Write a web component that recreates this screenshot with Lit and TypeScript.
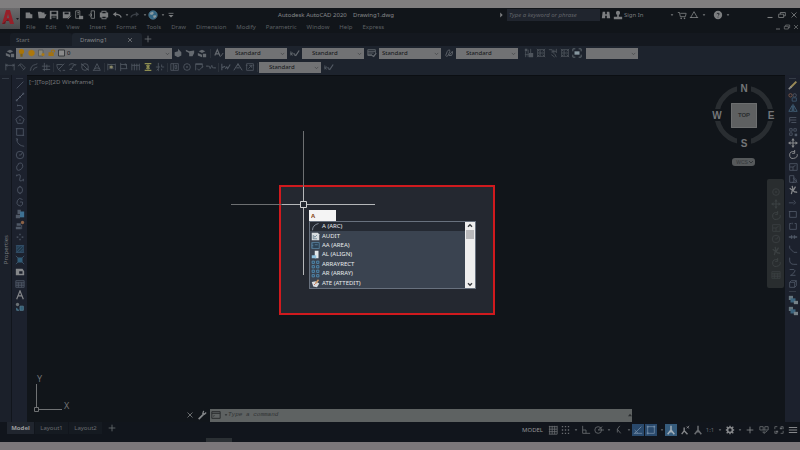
import { LitElement, html, svg, css, nothing } from "lit";
import { customElement, state } from "lit/decorators.js";
import { classMap } from "lit/directives/class-map.js";

// Glyphs share a 12 x 12 grid and are stroked in the current text colour.
const glyphs: Record<string, unknown> = {
  newFile: svg`<path class="f" d="M2 3h5l1 2h2v5H2z"/>`,
  open: svg`<path class="f" d="M1 2h4l1 1h3v2h2.5L9 10H2z"/>`,
  save: svg`<path class="f" fill-rule="evenodd" d="M1 1h10v10H1zM3 2v3h6V2zM3 7v4h6V7z"/><path d="M4 8.5h4"/>`,
  saveAs: svg`<path class="f" fill-rule="evenodd" d="M1 2h9v5L7 10H1zM3 3v2h5V3z"/><path d="M7 11l4-4"/>`,
  web: svg`<path d="M2 1h5v9H2zM4 3h2M4 5h2"/><path class="f" d="M6 7h5v4H6z"/>`,
  mobile: svg`<path d="M5 1h4v9H5zM2 6h4M4 4l2 2-2 2"/>`,
  print: svg`<path class="f" fill-rule="evenodd" d="M3 1h6v2h2v6H9v2H3V9H1V3h2zM4 2v2h4V2zM4 8v2h4V8z"/>`,
  undo: svg`<path stroke-width="1.6" d="M11 9Q10 5 3 5"/><path class="f" d="M1 5l4-3v6z"/>`,
  redo: svg`<path stroke-width="1.4" d="M1 9Q2 5 9 5"/><path class="f" d="M11 5L7 2v6z"/>`,
  globe: svg`<circle cx="6" cy="6" r="5" fill="#316583" stroke="#527b91"/><path fill="#8a999f" stroke="none" d="M3 3l3-1 1 2-2 2-3-1zM6 7l3-1 1 2-3 2z"/>`,
  dot: svg`<path class="f" d="M4 5h4L6 7.500z"/>`,
  more: svg`<path d="M3 4h6"/><path class="f" d="M3 6h6L6 9z"/>`,
  right: svg`<path class="f" d="M5 3l3 3-3 3z"/>`,
  up: svg`<path class="f" d="M3 8h6L6 4z"/>`,
  binoc: svg`<path class="f" d="M2 2h3v3h2V2h3l1 8H7V7H5v3H1z"/>`,
  user: svg`<circle class="f" cx="6" cy="3.500" r="2.500"/><path class="f" d="M5 5h2v3h4v3H1V8h4z"/>`,
  cart: svg`<path d="M1 3h2l1 5h6l1-4H4"/><circle class="f" cx="5" cy="10" r="1"/><circle class="f" cx="9" cy="10" r="1"/>`,
  share: svg`<path d="M2 9l4-7 4 7zM1 9h3M8 9h3"/>`,
  help: svg`<circle class="f" cx="6" cy="6" r="5"/><path stroke="#181c22" d="M4.500 4.500q1.500-1.500 3 0 0 1-1.500 2M6 8v1"/>`,
  min: svg`<path stroke-width="1.300" d="M3 9h6"/>`,
  restore: svg`<path d="M2 5h6v4H2zM4 5V3h6v4H8"/>`,
  close: svg`<path d="M3 3l6 6M9 3L3 9"/>`,
  plus: svg`<path d="M6 2v8M2 6h8"/>`,
  chevron: svg`<path d="M3 5l3 3 3-3"/>`,
  layers: svg`<path class="f" d="M2 4l4-2 4 2-4 2zM1 6l5 2v3L1 9zM7 7h4v4H7z"/>`,
  layerUp: svg`<path class="f" d="M2 5l4-1V1l4 4v4l-4 2-4-2z"/>`,
  layerPrev: svg`<path class="f" d="M1 2l4 2 6-1v3L9 10H5V6L1 4z"/>`,
  bulb: svg`<circle cx="6" cy="4" r="3.500" fill="#a87408" stroke="none"/><path fill="#806014" stroke="none" d="M4.500 7h3v4h-3z"/>`,
  sun: svg`<circle cx="6" cy="6" r="4" fill="#ad780c" stroke="#a37928" stroke-dasharray="1 1"/>`,
  freeze: svg`<path fill="#898777" stroke="#515354" d="M2 2h6v8H2z"/><circle cx="8" cy="8" r="2" fill="#a97814" stroke="none"/>`,
  lock: svg`<path stroke="#a07114" stroke-width="1.500" d="M6 5V3q2-2 4 0v2"/><path fill="#a37210" stroke="none" d="M2 5h7v5H2z"/>`,
  swatch: svg`<path fill="#8b8b8b" stroke="#24272a" d="M2 2h8v8H2z"/>`,
  textStyle: svg`<path stroke-width="1.400" d="M1 9l3-7 3 7M2 7h4"/><path d="M6 9l2 1 3-4"/>`,
  dimStyle: svg`<path d="M1 4v5M1 7h5M3 5L1 7l2 2"/><path stroke-width="1.500" d="M5 8l2 1 4-6"/>`,
  tableStyle: svg`<path d="M1 2h9v4M1 2v7h5M1 4h9M1 6h7M1 8h5"/><path stroke-width="1.500" d="M6 9l2 1 3-4"/>`,
  leader: svg`<path d="M2 9l2-5q3-4 3 0L5 9q-2 2-3 0zM6 9l4-5q1 2-1 5z"/>`,
  linear: svg`<path d="M1 2v8M11 2v8M1 4h10M3 3L1 4l2 1M9 3l2 1-2 1"/>`,
  aligned: svg`<path d="M1 5l4-3 5 5-3 3M3 3l5 6"/>`,
  arcLen: svg`<path d="M2 10q0-6 6-7M5 10q0-3 5-4M8 3l2-1M2 10H1"/>`,
  ordinate: svg`<path d="M4 1v10M1 5h10M7 3v7M2 9h9"/>`,
  radius: svg`<path d="M1 3h7M1 3q0 6 5 8M3 9l7-7M8 10h3"/>`,
  jogged: svg`<path d="M1 4q4-4 8 0M2 9l4-3 0-2 4-1M2 9h3M9 10h2"/>`,
  diameter: svg`<circle cx="6" cy="6" r="4"/><path d="M2 2l8 8M2 2v2M10 10V8"/>`,
  angular: svg`<path d="M2 10l4-8 4 8H1M3 8q3-2 6 0"/>`,
  quick: svg`<path d="M1 2v8M10 2v8M1 3h9M3 6h5M3 8h5"/><path stroke="#9b9871" d="M5 4v4M3 5l4 2M7 5L3 7"/>`,
  base: svg`<path d="M2 1v10M2 3h7v5M2 8h8M7 2l2 1-2 1"/>`,
  cont: svg`<path d="M1 2v8M4 2v8M7 2v8M10 2v8M1 4h9"/>`,
  space: svg`<path stroke="#8d8d50" stroke-width="1.500" d="M2 2h8M2 10h8M6 3v6M4 4l2 2 2-2M4 8l2-2 2 2"/>`,
  brk: svg`<path d="M4 1v10M8 3v3M1 6h5M8 6h3M4 8l-2 2M8 8v2"/>`,
  tol: svg`<path d="M1 2v8h9V2zM4 2v8M6 4h2v4H6z"/>`,
  center: svg`<circle cx="6" cy="6" r="4"/><path d="M5 6h2M6 5v2"/>`,
  inspect: svg`<path d="M2 10V2h8v5M2 3h8M4 8l2 2 5-5"/>`,
  jog: svg`<path d="M1 5h3l1 3 2-4 1 3h3M1 4v2M11 6v2"/>`,
  edit: svg`<path stroke-width="1.300" d="M1 2v8M1 7l4-2M5 8l2-2 1 2 3-5"/>`,
  dimText: svg`<path stroke-width="1.200" d="M1 10l5-8 5 8M4 7h4M6 2v3"/>`,
  update: svg`<path d="M2 2h8v8H2zM1 4h2M9 4h2M4 8l4-4M8 7V4H5"/>`,
  line: svg`<path d="M2 10l8-8"/>`,
  xline: svg`<path stroke="#677080" d="M2 10l8-8"/><path class="f" d="M1 9h2v2H1zM9 1h2v2H9zM5 5h2v2H5z"/>`,
  pline: svg`<path d="M3 3h4q3 1 2 4t-5 2H2M3 2v2"/>`,
  polygon: svg`<path d="M6 1l5 4-2 5H3L1 5z"/><path d="M5 6h2"/>`,
  rect: svg`<path d="M2 2h8v8H2zM1 2h2M9 10h2"/>`,
  arc: svg`<path d="M2 2q1 7 9 8M1 1h2v2"/>`,
  circle: svg`<circle cx="6" cy="6" r="4.500"/><path d="M5 6h2l2-3"/>`,
  cloud: svg`<path d="M4 2q4-2 5 1t-1 5-4 2-2-3 1-3 1-2"/>`,
  spline: svg`<path d="M2 3q6-3 4 3t4 2M2 2v2M10 7v3"/>`,
  ellipse: svg`<ellipse cx="6" cy="6" rx="3" ry="4"/><path d="M6 1v2M6 9v2"/>`,
  ellArc: svg`<path d="M9 3q-4-3-6 1t1 6 5-1V6H6"/>`,
  block: svg`<path class="f" d="M3 1h4v5H3zM1 7h5v4H1z"/><path fill="#3e7193" stroke="none" d="M6 3h5v7H6z"/>`,
  makeBlock: svg`<path class="f" d="M2 4h5v3H2zM1 8h6v3H1z"/><circle cx="9" cy="3" r="2" fill="#8c6246" stroke="none"/><path d="M8 6v5"/>`,
  point: svg`<path stroke-width="1.500" d="M6 2v2M6 8v2M2 6h2M8 6h2"/>`,
  hatch: svg`<path fill="#20384b" stroke="#34506a" d="M2 2h8v8H2zM2 6l4-4M2 10l8-8M6 10l4-4M1 2h10M1 10h10"/>`,
  gradient: svg`<path fill="#315d78" stroke="none" d="M3 3h6v6H3z"/><path stroke="#3c566c" d="M1 1l3 3M11 1L8 4M1 11l3-3M11 11L8 8"/>`,
  region: svg`<path class="f" fill-rule="evenodd" d="M1 2h8l2 3v5H1zM5 5v3h4V5z"/>`,
  table: svg`<path d="M1 2h10v8H1zM1 4h10M1 6h10M1 8h10M4 4v6M8 4v6"/>`,
  mtext: svg`<path stroke-width="1.400" d="M2 11l4-10 4 10M3 7h6"/>`,
  addSel: svg`<circle cx="3" cy="3" r="2" fill="#6b7175" stroke="none"/><path fill="#346079" stroke="#52788b" d="M6 5h4v5H6zM2 7v3h3"/>`,
  erase: svg`<path stroke="#9b8b57" stroke-width="2.300" d="M3 9l7-7"/><path stroke="#8a8b8b" stroke-width="2" d="M1 11l3-3"/>`,
  copy: svg`<circle cx="3" cy="4" r="2" stroke="#855d48"/><circle cx="8" cy="4" r="2"/><path stroke="#3e5a71" d="M5 7h5v4H5z"/>`,
  mirror: svg`<path stroke="#45647c" d="M6 1v10M5 3v7H1zM7 3v7h4z"/>`,
  offset: svg`<path d="M2 3h8M2 6h8M4 9h6M2 3v6"/>`,
  array: svg`<path d="M2 2h3v3H2zM7 2h3v3H7zM2 7h3v3H2z"/><path class="f" d="M8 8h3v3H8z"/>`,
  move: svg`<path stroke-width="1.300" d="M6 2v8M2 6h8"/><path class="f" d="M6 0l2 3H4zM6 12l2-3H4zM0 6l3-2v4zM12 6L9 4v4z"/>`,
  rotate: svg`<path stroke-width="1.200" d="M8 2q-6-1-6 4t5 4 4-5M8 0v4H5"/>`,
  scale: svg`<path d="M2 2h9v8H2zM2 6h4v4M6 6l3-2"/>`,
  stretch: svg`<path d="M2 2h5v8H2zM7 4l3 3v3H5M6 5l5 5"/>`,
  trim: svg`<path stroke-width="1.500" d="M2 4l7 5M5 1l1 5M9 2L6 7M5 7l-1 4M9 8l2 1"/>`,
  extend: svg`<path d="M1 7h6M7 4l2 3-2 2"/>`,
  breakPt: svg`<path d="M2 3h8v7H2zM1 3h2"/>`,
  breakAt: svg`<path d="M4 3H2v7h8V3H8M5 2v2"/>`,
  join: svg`<path stroke-width="1.600" d="M1 6h4M7 6h4M4 4l1 2-1 2M8 4L7 6l1 2"/>`,
  chamfer: svg`<path d="M2 2v3l5 5h4"/>`,
  fillet: svg`<path d="M2 2v3q0 5 5 5h4"/>`,
  blend: svg`<path d="M2 3h5q3 1 0 4t-4 3h6"/>`,
  explode: svg`<path d="M2 4h6v6H2zM2 4l2-2h6v6l-2 2M8 4l2-2"/>`,
  front: svg`<path fill="#64747d" stroke="none" d="M1 1h5v5H1z"/><path fill="#3c647d" stroke="none" d="M3 4h6v5H3z"/><path fill="#758188" stroke="none" d="M7 7h5v4H7z"/>`,
  grid: svg`<path d="M2 1v10M5 1v10M8 1v10M1 2h10M1 5h10M1 8h10M11 1v10M1 11h10"/>`,
  snap: svg`<path stroke-width="1.600" stroke-dasharray="1.600 2" d="M1 2h10M1 6h10M1 10h10"/>`,
  ortho: svg`<path d="M2 1v9h9M2 6h4v4"/>`,
  polar: svg`<circle cx="5" cy="6" r="4"/><path d="M5 6l5-4M5 6h7"/>`,
  iso: svg`<path d="M7 1L4 5l4 5M4 5v4"/>`,
  track: svg`<path d="M1 10h10M2 10L10 2M2 6l4 4"/>`,
  osnap: svg`<path d="M2 2h8v8H2z"/><path class="f" d="M1 1h2v2H1zM9 1h2v2H9zM1 9h2v2H1z"/>`,
  scaleA: svg`<path stroke-width="1.800" d="M6 1v5l-4 5M6 6l4 5M4 8h4"/>`,
  scaleB: svg`<path stroke-width="1.700" d="M5 3v4l-3 4M5 7l4 4"/><path d="M8 2l3 2M11 1L8 4"/>`,
  gear: svg`<circle cx="6" cy="6" r="3" stroke-width="2"/><path stroke-width="1.700" d="M6 1v2M6 9v2M1 6h2M9 6h2M2 2l2 2M8 8l2 2M10 2L8 4M4 8l-2 2"/>`,
  monitor: svg`<path d="M1 2h4v4H1zM7 2h4v4H7zM4 8l2 2 4-3M6 5v5"/>`,
  full: svg`<path d="M1 5V2h3M8 2h3v3M11 7v3H8M4 10H1V7"/><path class="f" d="M7 3h3v2H7zM2 7h3v2H2z"/>`,
  menu: svg`<path stroke-width="1.300" d="M1 3h10M1 6h10M1 9h10"/>`,
  wrench: svg`<path stroke-width="2" d="M2 11l6-6"/><path stroke-width="1.500" d="M8 1L7 4l2 1 2-2"/>`,
  prompt: svg`<path d="M1 2h10v8H1zM1 4h10" stroke-width="1.200"/><path d="M3 6l1 1-1 1"/>`,
  ref: svg`<path class="f" d="M1 1h3v3H1zM6 6h5v5H6z"/><path d="M2 4v7M5 2v9M8 1v5M1 8h5"/>`,
  refA: svg`<path d="M2 2h8v8H2zM1 1l3 3M11 1L8 4M1 11l3-3M11 11L8 8M5 2v8M2 6h8"/>`,
  refB: svg`<path d="M1 2h4v4M5 4h5M7 2v5M10 1v5M4 8l4 3M8 7l2 4"/>`,
  viewport: svg`<path stroke="#6b7379" d="M1 4V1h3M8 1h3v3M11 8v3H8M4 11H1V8"/><path fill="#87979f" stroke="none" d="M3 4h6v4H3z"/>`,
  cmdArc: svg`<path stroke="#9ca8b5" d="M2 11q0-7 8-9"/>`,
  audit: svg`<path fill="#d6dce0" stroke="none" d="M1 1h8l2 2v8H1z"/><path stroke="#637b8d" d="M3 4v5h5M8 4L5 7 4 5"/>`,
  area: svg`<path stroke="#5b87a6" fill="#2e4355" d="M1 2h10v8H1zM1 4h2M1 6h2M1 8h2M5 5h4"/>`,
  align: svg`<path fill="#e2e7e9" stroke="none" d="M5 1h5v10H5z"/><path fill="#8ec1df" stroke="none" d="M1 7h6v4H1z"/>`,
  cmdArray: svg`<path stroke="#5c9ac1" fill="#29445a" d="M1.500 1.500h3v3h-3zM7.500 1.500h3v3h-3zM1.500 7.500h3v3h-3zM7.500 7.500h3v3h-3z"/>`,
  attedit: svg`<path fill="#d9dde0" stroke="none" d="M1 4l5-1 5 3-3 5-5-1z"/><path stroke="#cf9a68" stroke-width="2" d="M6 6l4-5"/><path stroke="#b94d38" d="M4 8l2-2"/>`,
};

const icon = (name: string, extra = "") =>
  html`<svg class="icon ${extra}" viewBox="0 0 12 12" aria-hidden="true">${glyphs[name]}</svg>`;

const tool = (name: string, extra = "") =>
  html`<button class="tool ${extra}" type="button" aria-label=${name}>${icon(name)}</button>`;

const combo = (label: string, value: string, extra = "") =>
  html`<span class="combo ${extra}">
    <select aria-label=${label}><option>${value}</option></select>${icon("chevron", "chev")}
  </span>`;

const menus = ["File", "Edit", "View", "Insert", "Format", "Tools", "Draw", "Dimension", "Modify", "Parametric", "Window", "Help", "Express"];

const dimensionGroups = [
  ["linear", "aligned", "arcLen", "ordinate"],
  ["radius", "jogged", "diameter", "angular"],
  ["quick", "base", "cont", "space", "brk"],
  ["tol", "center", "inspect", "jog"],
  ["edit", "dimText", "update"],
];

const drawTools = ["line", "xline", "pline", "polygon", "rect", "arc", "circle", "cloud", "spline", "ellipse", "ellArc", "block", "makeBlock", "point", "hatch", "gradient", "region", "table", "mtext", "addSel"];
const modifyTools = ["erase", "copy", "mirror", "offset", "array", "move", "rotate", "scale", "stretch", "trim", "extend", "breakPt", "breakAt", "join", "chamfer", "fillet", "blend", "explode"];

const commands = [
  ["cmdArc", "A (ARC)"],
  ["audit", "AUDIT"],
  ["area", "AA (AREA)"],
  ["align", "AL (ALIGN)"],
  ["cmdArray", "ARRAYRECT"],
  ["cmdArray", "AR (ARRAY)"],
  ["attedit", "ATE (ATTEDIT)"],
];

@customElement("app-root")
export class AppRoot extends LitElement {
  @state() private selected = 0;

  static styles = css`
    :host {
      display: flex;
      flex-direction: column;
      min-height: 100vh;
      background: #11151a;
      color: #7c7e80;
      font: 6px/10px "Noto Sans", "Open Sans", sans-serif;
    }
    * { box-sizing: border-box; }
    button, input, select {
      margin: 0;
      padding: 0;
      border: 0;
      border-radius: 0;
      background: none;
      color: inherit;
      font: inherit;
    }
    .icon {
      display: block;
      width: 10px;
      height: 10px;
      fill: none;
      stroke: currentColor;
      stroke-width: 1;
    }
    .icon .f { fill: currentColor; stroke: none; }
    .tool {
      display: grid;
      place-items: center;
      flex: none;
      width: 12px;
      height: 12px;
    }
    .slim { width: 6px; }
    .slim .icon { width: 8px; height: 8px; }
    .wide { width: 15px; }
    .dim { color: #3b4047; }
    .band { flex: none; height: 8px; background: #807e7f; }
    .band.low { background: #7b777a; }

    .header { display: grid; grid-template-columns: 20px 1fr; grid-template-rows: 13px 12px; }
    .logo {
      grid-row: 1 / 3;
      align-self: start;
      width: 20px;
      height: 21px;
      background: linear-gradient(#6b6a6c, #4b4b4d);
    }
    .logo svg { display: block; width: 20px; height: 21px; }
    .titlebar { display: flex; align-items: center; min-width: 0; }
    .quick { display: grid; grid-template-columns: repeat(8, 1fr); justify-items: center; width: 100px; margin-left: 3px; }
    .title { flex: 1; text-align: center; white-space: pre; color: #87898b; }
    .search { width: 93px; height: 12px; padding: 0 2px; background: #20252e; font-style: italic; }
    .search::placeholder { color: #606469; opacity: 1; }
    .sign { flex: none; width: 44px; text-align: left; }
    .store { display: flex; margin: 0 6px 0 2px; }
    .winbtns { display: flex; margin-left: auto; }
    .titlebar .winbtns { margin-left: 34px; }
    .menubar { display: flex; align-items: center; gap: 10px; padding-left: 6px; color: #5d6064; }
    .menubar .tool { width: 9px; color: #7c7e80; }
    .menubar .icon { width: 8px; height: 8px; }

    .tabs { display: flex; height: 13px; padding-left: 10px; color: #6c6f73; background: #14181f; }
    .tab { display: flex; align-items: center; justify-content: space-between; width: 62px; padding: 0 6px; background: #181d25; border-radius: 3px 3px 0 0; }
    .tab.on { width: 70px; padding: 0 8px; background: #1e242d; color: #85878a; }
    .tab .icon { width: 8px; height: 8px; }

    .bars { background: #1d232d; height: 29px; }
    .bar { display: flex; align-items: center; height: 14px; padding-left: 4px; color: #656a70; }
    .bar.second { color: #515862; }
    .sep { flex: none; width: 1px; height: 9px; margin: 0 1px; background: #2b313a; }
    .sep.big { margin: 0 2px; }
    .combo { display: grid; flex: none; width: 62px; height: 11px; background: #717274; color: #111214; }
    .combo > * { grid-area: 1 / 1; }
    .combo select { appearance: none; width: 100%; padding-left: 10px; line-height: 11px; }
    .combo.near select { padding-left: 3px; }
    .combo.short { width: 52px; margin-left: 3px; }
    .chev { width: 7px; height: 7px; justify-self: end; align-self: center; margin-right: 1px; color: #393b3e; pointer-events: none; }
    .layer { display: flex; align-items: center; width: 156px; height: 11px; background: #717274; }
    .layer > .icon { flex: none; width: 9px; margin-left: 1px; }
    .layer .combo { flex: 1; }
    .layer .combo select { padding-left: 1px; }
    .refs { display: flex; margin-left: 5px; color: #4e545c; }

    .work { flex: 1; display: flex; }
    .side { display: flex; flex-direction: column; flex: none; width: 15px; padding-top: 3px; background: #1c212d; color: #4f5866; }
    .props { width: 12px; align-items: center; border-right: 1px solid #11151c; background: #1b202a; color: #75787c; }
    .props .name { margin-top: 156px; writing-mode: vertical-rl; transform: rotate(180deg); line-height: 10px; }
    .grip { align-self: center; width: 7px; height: 1px; background: #343b46; }
    .stack { display: grid; justify-items: center; align-items: center; grid-auto-rows: 1fr; }
    .stack .tool { height: 10px; }
    .stack.draw { height: 234px; }
    .stack.modify { height: 211px; margin-bottom: 1px; }
    .stack.order { height: 23px; margin-top: 2px; }
    .bright { color: #85878a; }

    .canvas { position: relative; flex: 1; overflow: hidden; background: #11151a; border-top: 1px solid #0b0e12; }
    .viewlabel { position: absolute; left: 2px; top: 1px; color: #76787a; }
    .spot { position: absolute; left: 252px; top: 109px; width: 216px; height: 130px; border: 2px solid #d01a1e; background: #242830; }
    .cross { position: absolute; left: 203px; top: 55px; width: 146px; height: 146px; fill: none; }
    .pop { position: absolute; left: 282px; top: 134px; width: 167px; }
    .entry { display: block; width: 27px; height: 11px; padding-left: 2px; background: #f4f4f4; color: #8b4f1c; font-weight: 700; }
    .list { display: flex; height: 68px; border: 1px solid #68717e; background: #3a4350; color: #e9ebed; }
    .options { flex: 1; display: grid; grid-template-rows: repeat(7, 1fr); }
    .option { display: flex; align-items: center; gap: 2px; padding-left: 1px; line-height: 9px; text-align: left; }
    .option .icon { width: 9px; height: 9px; }
    .option.on { background: #242932; }
    .scroll { display: flex; flex-direction: column; align-items: center; width: 10px; background: #eeeeee; color: #35383c; }
    .scroll .icon { width: 8px; height: 8px; stroke-width: 2; }
    .scroll .flip { transform: rotate(180deg); }
    .thumb { width: 8px; height: 9px; background: #b9b9bb; }
    .scroll .tail { margin-top: auto; }

    .cube { position: absolute; right: 6px; top: 4px; width: 70px; height: 88px; }
    .cube text { text-anchor: middle; font-family: "Liberation Sans", sans-serif; }
    .nav { position: absolute; right: 1px; top: 103px; width: 17px; height: 109px; padding: 8px 3px; display: flex; flex-direction: column; justify-content: space-between; align-items: center; background: #292d2f; color: #3b4042; border-radius: 2px; }
    .ucs { position: absolute; left: 7px; bottom: 8px; width: 40px; height: 40px; fill: none; stroke: #707274; }
    .ucs text { fill: #707274; stroke: none; font-size: 9px; }
    .command { position: absolute; left: 157px; right: 153px; bottom: 0; height: 14px; display: flex; align-items: center; }
    .command .line { flex: 1; display: flex; align-items: center; height: 13px; margin-left: 2px; background: #5e6262; color: #2b2e30; }
    .command input { flex: 1; min-width: 0; font: italic 6px/10px "Liberation Mono", monospace; }
    .command input::placeholder { color: #303334; opacity: 1; }

    .footer { display: flex; justify-content: space-between; height: 20px; background: #11151c; }
    .sheets { display: flex; height: 12px; padding-left: 7px; color: #696c70; }
    .sheet { width: 34px; background: #151a21; border-right: 1px solid #11151c; }
    .sheet.on { width: 28px; background: #20252e; color: #9a9b9d; font-weight: 700; }
    .sheets .tool { width: 18px; }
    .status { display: flex; align-items: center; height: 15px; padding-right: 1px; color: #696c70; }
    .mode { width: 24px; color: #929496; text-align: left; }
    .status .tool { width: 13px; }
    .status .slim { width: 7px; }
    .status .roomy { width: 15px; }
    .status .on { height: 12px; width: 12px; margin-right: 1px; background: #29496c; color: #718aa5; }
    .status .vivid { background: #365c7d; color: #a3afb9; }
    .status .ratio { width: 12px; }
    .task { align-self: end; width: 26px; height: 4px; margin-right: auto; margin-left: 85px; background: #2b3034; }
  `;

  private renderHeader() {
    return html`<header class="header">
      <button class="logo" type="button" aria-label="Application menu">
        <svg viewBox="0 0 20 21">
          <path fill="#962029" d="M2 16L6 2h4l4 14h-4l-1-3H6l-1 3zM7 10h2L8 6z" />
          <path fill="#6b1a22" d="M2 16l6-5 1 2H6l-1 3z" />
          <path fill="#1b1c20" d="M16 10h3l-1.500 2z" />
        </svg>
      </button>
      <div class="titlebar">
        <div class="quick">${["newFile", "open", "save", "saveAs", "web", "mobile", "print", "undo"].map((n) => tool(n))}</div>
        ${tool("dot", "slim")}${tool("redo", "dim")}${tool("dot", "slim")}${tool("globe")}${tool("dot", "slim")}${tool("more")}
        <span class="title">Autodesk AutoCAD 2020    Drawing1.dwg</span>
        ${tool("right")}
        <input class="search" aria-label="Search" placeholder="Type a keyword or phrase" />
        ${tool("binoc")}${tool("user")}
        <button class="sign" type="button">Sign In</button>
        ${tool("dot", "slim")}
        <div class="store">${tool("cart")}${tool("share")}${tool("dot", "slim")}</div>
        ${tool("help")}${tool("dot", "slim")}
        <div class="winbtns">${tool("min")}${tool("restore")}${tool("close")}</div>
      </div>
      <nav class="menubar">
        ${menus.map((m) => html`<button type="button">${m}</button>`)}
        <div class="winbtns">${tool("min")}${tool("restore")}${tool("close")}</div>
      </nav>
    </header>`;
  }

  private renderBars() {
    return html`<div class="bars">
      <div class="bar">
        ${tool("layers")}
        <div class="layer">
          ${["bulb", "sun", "freeze", "lock", "swatch"].map((n) => icon(n))}
          ${combo("Layer", "0")}
        </div>
        ${tool("layerUp")}${tool("layerPrev")}${tool("layers")}<span class="sep big"></span>${tool("textStyle")}
        ${combo("Text style", "Standard")}${tool("dimStyle", "wide")}
        ${combo("Dimension style", "Standard")}${tool("tableStyle", "wide")}
        ${combo("Table style", "Standard", "near")}${tool("leader", "wide")}
        ${combo("Multileader style", "Standard")}
        <div class="refs">${["ref", "refA", "refB", "refA", "viewport"].map((n) => tool(n))}</div>
        ${combo("Viewport scale", "", "short")}
      </div>
      <div class="bar second">
        ${dimensionGroups.map((g, i) => html`${i ? html`<span class="sep"></span>` : nothing}${g.map((n) => tool(n))}`)}
        <span class="sep"></span>
        ${combo("Current dimension style", "Standard")}${tool("dimStyle", "wide")}
      </div>
    </div>`;
  }

  private renderCanvas() {
    return html`<main class="canvas">
      <span class="viewlabel">[−][Top][2D Wireframe]</span>
      <div class="spot"></div>
      <svg class="cross" viewBox="0 0 146 146" aria-hidden="true">
        <path stroke="#6d6f71" d="M73.500 0v70M1 73.500h69" />
        <path stroke="#b5b7b9" d="M73.500 56v14M73.500 77v67M52 73.500h18M77 73.500h68" />
        <path stroke="#d0d1d2" d="M70.500 70.500h6v6h-6z" />
      </svg>
      <div class="pop">
        <input class="entry" aria-label="Command" value="A" />
        <div class="list">
          <div class="options" role="listbox" aria-label="Suggestions">
            ${commands.map(
              ([glyph, name], i) => html`<button
                type="button"
                role="option"
                aria-selected=${i === this.selected}
                class=${classMap({ option: true, on: i === this.selected })}
                @click=${() => (this.selected = i)}
              >${icon(glyph)}${name}</button>`
            )}
          </div>
          <div class="scroll">${icon("chevron", "flip")}<span class="thumb"></span>${icon("chevron", "tail")}</div>
        </div>
      </div>
      <svg class="cube" viewBox="0 0 70 88" role="img" aria-label="View cube">
        <circle cx="35" cy="35" r="27" fill="none" stroke="#292d31" stroke-width="5" />
        <path fill="#11151a" d="M28 1h14v14H28zM28 56h14v13H28zM1 29h14v12H1zM56 29h13v12H56z" />
        <path fill="#5e6061" d="M22 23h26v25H22z" />
        <path fill="none" stroke="#6c6e6f" d="M22.500 23.500h25v24h-25z" />
        <text x="35" y="37" font-size="6" fill="#2b2d2f" font-weight="700">TOP</text>
        <g fill="#747678" font-size="10" font-weight="700">
          <text x="35" y="12">N</text><text x="35" y="67">S</text>
          <text x="8" y="39">W</text><text x="62" y="39">E</text>
        </g>
        <rect x="23" y="78" width="23" height="8" rx="3" fill="#56595b" />
        <text x="33" y="84" font-size="5" fill="#33373a">WCS</text>
        <path fill="none" stroke="#33373a" d="M40 81l2 2 2-2" />
      </svg>
      <div class="nav">${["center", "move", "rotate", "scale", "circle", "trim", "rotate", "table"].map((n) => icon(n))}</div>
      <svg class="ucs" viewBox="0 0 40 40" aria-label="UCS icon">
        <path d="M2.500 33V10M5 35.500h23M.500 33.500h4v4h-4z" />
        <text x="3" y="8">Y</text><text x="30" y="35">X</text>
      </svg>
      <div class="command">
        ${tool("close")}${tool("wrench", "bright")}
        <div class="line">
          ${tool("prompt")}${tool("dot", "slim")}
          <input aria-label="Command line" placeholder="Type a command" />${tool("up", "slim")}
        </div>
      </div>
    </main>`;
  }

  private renderFooter() {
    return html`<footer class="footer">
      <div class="sheets">
        <button class="sheet on" type="button">Model</button>
        <button class="sheet" type="button">Layout1</button>
        <button class="sheet" type="button">Layout2</button>
        ${tool("plus")}
      </div>
      <span class="task"></span>
      <div class="status">
        <button class="mode" type="button">MODEL</button>
        ${tool("grid")}${tool("snap")}${tool("dot", "slim")}
        ${tool("ortho")}${tool("polar")}${tool("dot", "slim")}
        ${tool("iso")}${tool("dot", "slim")}
        ${tool("track", "on")}${tool("osnap", "on")}${tool("dot", "slim")}
        ${tool("scaleA", "on vivid")}${tool("scaleB", "bright")}${tool("scaleA")}
        <button class="ratio" type="button">1:1</button>${tool("dot", "slim")}
        ${tool("gear", "bright")}${tool("dot", "slim")}${tool("plus", "bright")}
        ${tool("monitor", "roomy")}${tool("full", "roomy")}${tool("menu", "bright")}
      </div>
    </footer>`;
  }

  render() {
    return html`
      <div class="band"></div>
      ${this.renderHeader()}
      <div class="tabs">
        <button class="tab" type="button">Start</button>
        <button class="tab on" type="button">Drawing1 ${icon("close")}</button>
        ${tool("plus")}
      </div>
      ${this.renderBars()}
      <div class="work">
        <aside class="side props"><span class="grip"></span><span class="name">Properties</span></aside>
        <aside class="side">
          <span class="grip"></span>
          <div class="stack draw">${drawTools.map((n) => tool(n, ["region", "mtext"].includes(n) ? "bright" : ""))}</div>
        </aside>
        ${this.renderCanvas()}
        <aside class="side">
          <span class="grip"></span>
          <div class="stack modify">${modifyTools.map((n) => tool(n, ["move", "trim", "rotate"].includes(n) ? "bright" : ""))}</div>
          <span class="grip"></span>
          <div class="stack order">${tool("front")}${tool("front")}</div>
        </aside>
      </div>
      ${this.renderFooter()}
      <div class="band low"></div>
    `;
  }
}
